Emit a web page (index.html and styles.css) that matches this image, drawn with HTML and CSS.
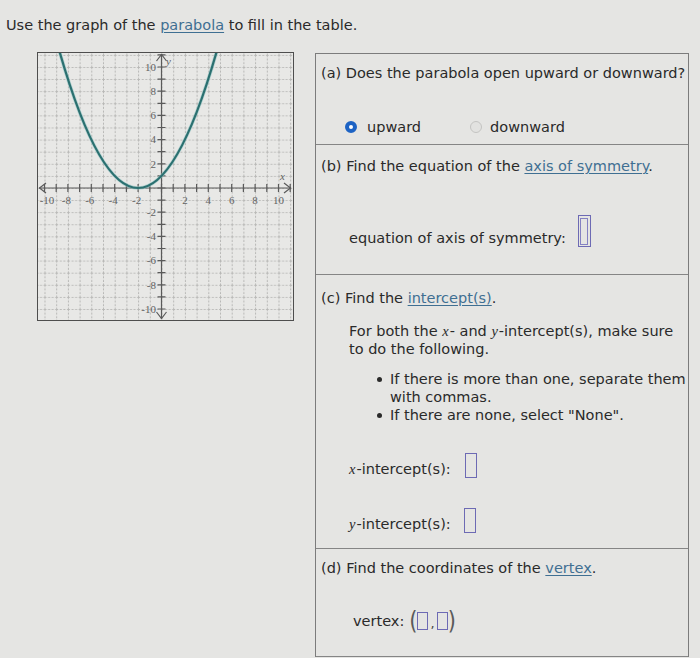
FILE: index.html
```html
<!DOCTYPE html>
<html lang="en">
<head>
<meta charset="utf-8">
<title>Parabola table</title>
<link rel="stylesheet" href="styles.css">
</head>
<body>
<div class="page">
  <p class="prompt">Use the graph of the <span class="term">parabola</span> to fill in the table.</p>
  <div class="main">
    <div class="graph">
      <svg class="plot" width="255" height="267" viewBox="0 0 255 267" xmlns="http://www.w3.org/2000/svg">
        <defs>
          <pattern id="grid" patternUnits="userSpaceOnUse" x="123.5" y="135" width="11.7" height="12.1">
            <path d="M0.5 0V12.1M0 0.5H11.7" stroke="#b8b8b6" stroke-width="1" stroke-dasharray="2 1.6" fill="none"/>
          </pattern>
        </defs>
        <rect x="0" y="0" width="255" height="267" fill="url(#grid)"/>
        <!-- axes -->
        <line x1="1" y1="135" x2="253" y2="135" stroke="#5a5a5a" stroke-width="1.2"/>
        <line x1="123.5" y1="1" x2="123.5" y2="266" stroke="#5a5a5a" stroke-width="1.2"/>
        <!-- ticks -->
        <line x1="5.9" y1="135" x2="254" y2="135" stroke="#5a5a5a" stroke-width="8" stroke-dasharray="1.2 10.5"/>
        <line x1="123.5" y1="1.3" x2="123.5" y2="262" stroke="#5a5a5a" stroke-width="8" stroke-dasharray="1.2 10.9"/>
        <!-- arrows -->
        <polyline points="8,130 1.5,135 8,140" fill="none" stroke="#5a5a5a" stroke-width="1.2"/>
        <polyline points="246,130 252.5,135 246,140" fill="none" stroke="#5a5a5a" stroke-width="1.2"/>
        <polyline points="118.5,8 123.5,1.5 128.5,8" fill="none" stroke="#5a5a5a" stroke-width="1.2"/>
        <polyline points="118.5,259 123.5,265.5 128.5,259" fill="none" stroke="#5a5a5a" stroke-width="1.2"/>
        <!-- labels -->
        <g class="ticklabels" text-anchor="middle">
          <text x="9" y="151">-10</text>
          <text x="28.4" y="151">-8</text>
          <text x="51.8" y="151">-6</text>
          <text x="75.2" y="151">-4</text>
          <text x="98.6" y="151">-2</text>
          <text x="146.9" y="151">2</text>
          <text x="170.3" y="151">4</text>
          <text x="193.7" y="151">6</text>
          <text x="217.1" y="151">8</text>
          <text x="240.5" y="151">10</text>
        </g>
        <g class="ticklabels" text-anchor="end">
          <text x="118" y="17.8">10</text>
          <text x="118" y="42">8</text>
          <text x="118" y="66.2">6</text>
          <text x="118" y="90.4">4</text>
          <text x="118" y="114.6">2</text>
          <text x="118" y="163">-2</text>
          <text x="118" y="187.2">-4</text>
          <text x="118" y="211.4">-6</text>
          <text x="118" y="235.6">-8</text>
          <text x="118" y="259.8">-10</text>
        </g>
        <text class="axisname" x="242" y="127">x</text>
        <text class="axisname" x="128" y="12">y</text>
        <!-- parabola -->
        <path d="M18.2 -13.2Q100.1 283.2 182 -13.2" fill="none" stroke="#8fc3c3" stroke-width="3.6" opacity="0.6"/>
        <path d="M18.2 -13.2Q100.1 283.2 182 -13.2" fill="none" stroke="#2b7070" stroke-width="2.2"/>
      </svg>
    </div>

    <div class="table">
      <section class="row row-a">
        <div class="q">(a) Does the parabola open upward or downward?</div>
        <div class="radios">
          <span class="opt"><span class="radio on"></span>upward</span>
          <span class="opt opt-off"><span class="radio"></span>downward</span>
        </div>
      </section>

      <section class="row row-b">
        <div class="q">(b) Find the equation of the <span class="term">axis of symmetry</span>.</div>
        <div class="answer answer-b">
          <span>equation of axis of symmetry:</span>
          <span class="box-tall"><span class="box-inner"></span></span>
        </div>
      </section>

      <section class="row row-c">
        <div class="q">(c) Find the <span class="term">intercept(s)</span>.</div>
        <p class="note">For both the <i class="var">x</i>- and <i class="var">y</i>-intercept(s), make sure to do the following.</p>
        <ul class="rules">
          <li>If there is more than one, separate them with commas.</li>
          <li>If there are none, select "None".</li>
        </ul>
        <div class="answer answer-x">
          <span><i class="var">x</i>-intercept(s):</span>
          <span class="box"></span>
        </div>
        <div class="answer answer-y">
          <span><i class="var">y</i>-intercept(s):</span>
          <span class="box"></span>
        </div>
      </section>

      <section class="row row-d">
        <div class="q">(d) Find the coordinates of the <span class="term">vertex</span>.</div>
        <div class="answer answer-v">
          <span>vertex:</span>
          <span class="pair">
            <span class="paren">(</span>
            <span class="box box-small"></span>
            <span class="comma">,</span>
            <span class="box box-small"></span>
            <span class="paren">)</span>
          </span>
        </div>
      </section>
    </div>
  </div>
</div>
</body>
</html>
```

FILE: styles.css
```css
* { box-sizing: border-box; }

html, body {
  margin: 0;
  background: #e5e5e3;
}

body {
  font-family: "DejaVu Sans", Verdana, sans-serif;
  font-size: 14.5px;
  line-height: 18px;
  color: #2a2a2a;
}

.page {
  padding: 16px 0 0 6px;
  width: 700px;
  height: 658px;
  overflow: hidden;
}

.prompt {
  margin: 0;
  height: 18px;
}

.term {
  color: #3f6f92;
  text-decoration: underline;
  text-decoration-thickness: 1px;
  text-underline-offset: 2px;
}

.main {
  display: flex;
  align-items: flex-start;
  margin-top: 18px;
}

.graph {
  margin-left: 31px;
  border: 1px solid #4e4e4e;
  width: 257px;
  height: 269px;
  background: #e8e8e6;
}

.plot { display: block; }

.ticklabels text {
  font-family: "Liberation Serif", "Times New Roman", serif;
  font-size: 11px;
  fill: #626262;
}

.axisname {
  font-family: "Liberation Serif", "Times New Roman", serif;
  font-style: italic;
  font-size: 11px;
  fill: #626262;
}

.table {
  margin-left: 21px;
  margin-top: 1px;
  width: 374px;
  border: 1px solid #7c7c7c;
  border-bottom: none;
}

.row {
  border-bottom: 1px solid #858585;
  padding-left: 5px;
}

.row-a { height: 91px; padding-top: 10px; }
.row-b { height: 130px; padding-top: 12px; }
.row-c { height: 274px; padding-top: 14px; }
.row-d { height: 108px; padding-top: 10px; }

.q { white-space: nowrap; }

.radios {
  display: flex;
  align-items: center;
  margin-top: 36px;
  margin-left: 24px;
}

.opt {
  display: flex;
  align-items: center;
  gap: 10px;
}

.opt-off {
  margin-left: 49px;
  gap: 8px;
}

.radio {
  width: 12px;
  height: 12px;
  border-radius: 50%;
  border: 1px solid #c4c4c2;
  background: #e2e2e0;
}

.radio.on {
  border: 4px solid #1d63c4;
  background: #ffffff;
}

.answer {
  display: flex;
  align-items: flex-end;
  margin-left: 28px;
}

.answer-b {
  margin-top: 40px;
  gap: 12px;
}

.box-tall {
  display: flex;
  width: 13px;
  height: 32px;
  border: 1.5px solid #6d6ab4;
  padding: 1.5px 1.5px;
}

.box-inner {
  flex: 1;
  border: 1px solid #8481c2;
}

.note {
  margin: 15px 0 0 28px;
  width: 336px;
}

.var {
  font-family: "Liberation Serif", "Times New Roman", serif;
  font-size: 14.5px;
  padding-right: 1px;
}

.rules {
  list-style: none;
  margin: 12px -12px 0 0;
  padding: 0;
}

.rules li {
  display: flex;
  align-items: flex-start;
}

.rules li::before {
  content: "";
  flex: none;
  width: 5px;
  height: 5px;
  border-radius: 50%;
  background: #2a2a2a;
  margin: 7px 8px 0 56px;
}

.answer-x {
  margin-top: 29px;
  gap: 14px;
}

.answer-y {
  margin-top: 30px;
  gap: 13px;
}

.box {
  width: 12px;
  height: 25px;
  border: 1.5px solid #6d6ab4;
}

.answer-v {
  margin-top: 33px;
  margin-left: 32px;
  align-items: center;
  gap: 5px;
}

.pair {
  display: flex;
  align-items: center;
  color: #5a5a5a;
}

.paren {
  font-size: 21px;
  line-height: 22px;
  transform: scaleY(1.15);
}

.box-small {
  width: 11px;
  height: 18px;
}

.comma {
  margin: 0 2px;
  align-self: flex-end;
  color: #444;
  font-size: 13px;
  line-height: 16px;
}
```
